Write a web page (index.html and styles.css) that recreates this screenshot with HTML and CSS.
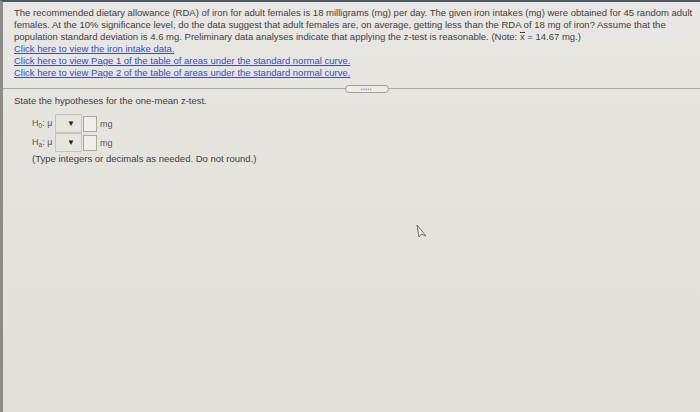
FILE: index.html
```html
<!DOCTYPE html>
<html>
<head>
<meta charset="utf-8">
<link rel="stylesheet" href="styles.css">
</head>
<body>
<div class="screen">
  <div class="question">
    <p class="stem">The recommended dietary allowance (RDA) of iron for adult females is 18 milligrams (mg) per day. The given iron intakes (mg) were obtained for 45 random adult<br>females. At the 10% significance level, do the data suggest that adult females are, on average, getting less than the RDA of 18 mg of iron? Assume that the<br>population standard deviation is 4.6 mg. Preliminary data analyses indicate that applying the z-test is reasonable. (Note: <span class="xbar">x</span> = 14.67 mg.)</p>
    <a class="link" href="#">Click here to view the iron intake data.</a>
    <a class="link" href="#">Click here to view Page 1 of the table of areas under the standard normal curve.</a>
    <a class="link" href="#">Click here to view Page 2 of the table of areas under the standard normal curve.</a>
  </div>
  <div class="divider">
    <span class="pill">•••••</span>
  </div>
  <div class="answer">
    <p class="prompt">State the hypotheses for the one-mean z-test.</p>
    <div class="hyp">
      <span class="hlabel">H<sub>0</sub>: μ</span>
      <span class="select"><span class="arrow">▼</span></span>
      <span class="input"></span>
      <span class="unit">mg</span>
    </div>
    <div class="hyp">
      <span class="hlabel">H<sub>a</sub>: μ</span>
      <span class="select"><span class="arrow">▼</span></span>
      <span class="input"></span>
      <span class="unit">mg</span>
    </div>
    <p class="note">(Type integers or decimals as needed. Do not round.)</p>
  </div>
  <svg class="cursor" width="14" height="16" viewBox="0 0 14 16">
    <path d="M2 1 L4 13 L6.5 10 L11 12 Z" fill="#f0efec" stroke="#6a6a6a" stroke-width="1"/>
  </svg>
</div>
</body>
</html>
```
FILE: styles.css
```css
html, body {
  margin: 0;
  padding: 0;
}
body {
  width: 700px;
  height: 412px;
  overflow: hidden;
  background: #e3e1dc;
  font-family: "Liberation Sans", Arial, sans-serif;
  color: #3e3e40;
}
.screen {
  position: relative;
  height: 412px;
  border-top: 2px solid #4a5866;
  border-left: 3px solid #8c8b88;
  box-sizing: border-box;
  background: linear-gradient(180deg, #e9e7e3 0%, #e4e2dd 50%, #e1dfda 100%);
}
.question {
  padding: 5px 0 0 11px;
  display: flex;
  flex-direction: column;
}
.stem {
  margin: 0;
  font-size: 9.5px;
  line-height: 12px;
  white-space: nowrap;
}
.xbar {
  display: inline-block;
  line-height: 8px;
  border-top: 1px solid #3e3e40;
}
.link {
  font-size: 9.5px;
  line-height: 12px;
  color: #3c4ea6;
  text-decoration: underline;
  white-space: nowrap;
}
.divider {
  margin-top: 5px;
  height: 9px;
  display: flex;
  align-items: center;
  justify-content: center;
  background: linear-gradient(180deg, transparent 4px, #a9a8a4 4px, #a9a8a4 5px, transparent 5px);
}
.pill {
  width: 42px;
  height: 6px;
  border: 1px solid #9e9d99;
  border-radius: 4px;
  background: #eeede9;
  font-size: 5px;
  line-height: 6px;
  letter-spacing: 0.5px;
  color: #8a8984;
  text-align: center;
  margin-left: 30px;
}
.answer {
  padding: 2px 0 0 11px;
}
.prompt {
  margin: 0 0 7px 0;
  font-size: 9.5px;
  line-height: 12px;
}
.hyp {
  display: flex;
  align-items: center;
  height: 19px;
  padding-left: 18px;
  font-size: 9px;
}
.hlabel {
  width: 23px;
  color: #555;
}
.hlabel sub {
  font-size: 6.5px;
  vertical-align: -2px;
}
.select {
  width: 27px;
  height: 19px;
  box-sizing: border-box;
  border: 1px solid #c5c3be;
  background: #e7e5e0;
  display: flex;
  align-items: center;
  justify-content: flex-end;
  padding-right: 6px;
}
.arrow {
  font-size: 8px;
  color: #222;
}
.input {
  width: 12px;
  height: 14px;
  margin-left: 1px;
  border: 1px solid #a9a7a2;
  background: #efeeea;
}
.unit {
  margin-left: 3px;
  color: #555;
}
.note {
  margin: 1px 0 0 18px;
  font-size: 9.5px;
  line-height: 12px;
}
.cursor {
  position: absolute;
  left: 412px;
  top: 222px;
}
```
